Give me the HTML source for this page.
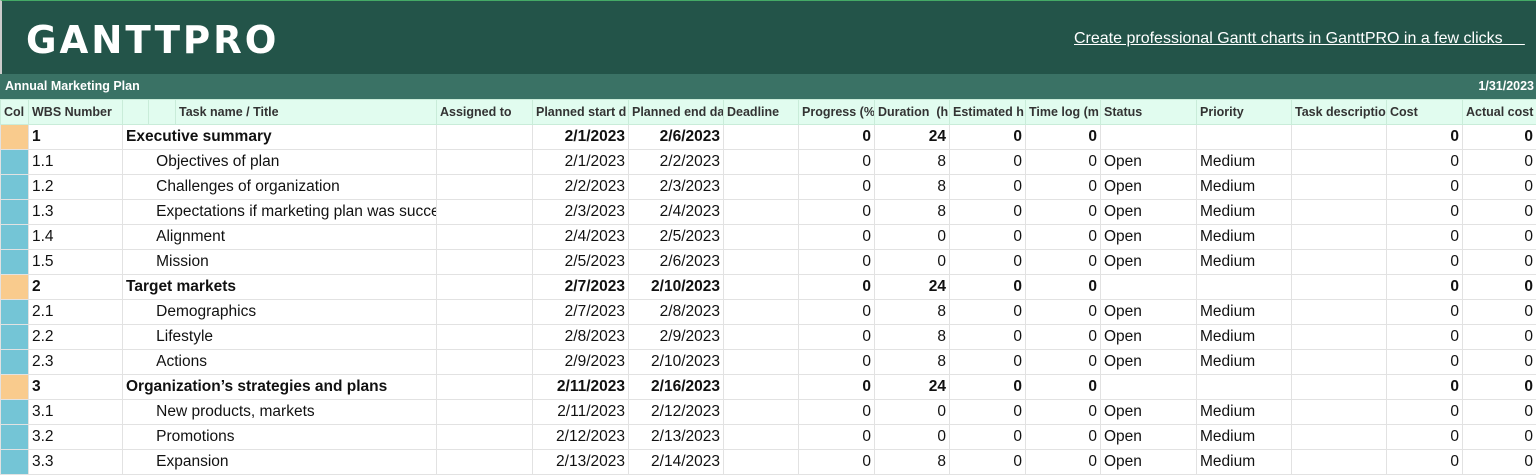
<!DOCTYPE html>
<html><head><meta charset="utf-8"><style>
*{margin:0;padding:0;box-sizing:border-box}
body{width:1536px;height:472px;overflow:hidden;background:#fff;font-family:"Liberation Sans",Arial,sans-serif}
.top{position:absolute;left:0;top:0;width:1536px;height:74px;background:#235449;border-top:1px solid #4a6;border-left:2px solid #ccc}
.logo{position:absolute;left:24px;top:17px;color:#fff;font-size:38px;font-weight:bold;letter-spacing:3px;font-family:"DejaVu Sans",sans-serif;transform:scaleX(0.98);transform-origin:left}
.link{position:absolute;left:1072px;top:29px;color:#fff;font-size:16px;text-decoration:underline;white-space:pre}
.title{position:absolute;left:0;top:74px;width:1536px;height:25px;background:#3a7265;color:#fff;font-size:12.5px;font-weight:bold}
.title span{position:absolute;top:5px}
table{position:absolute;left:0;top:99px;border-collapse:collapse;table-layout:fixed;width:1536px}
td{height:25px;border:1px solid #e2e2e2;font-size:15.5px;white-space:nowrap;overflow:hidden;padding:0 3px;color:#111}
tr.h td{background:#e1fcef;font-size:12.5px;font-weight:bold;color:#333;border-color:#c9ecd9;padding:0 3px}
tr.b td{font-weight:bold}
.r{text-align:right}
.o{background:#f9cb8d}.c{background:#74c5d6}
</style></head><body>
<div class="top"><div class="logo">GANTTPRO</div><div class="link">Create professional Gantt charts in GanttPRO in a few clicks     </div></div>
<div class="title"><span style="left:5px">Annual Marketing Plan</span><span style="right:2px">1/31/2023</span></div>
<table>
<colgroup><col style="width:28px"><col style="width:94px"><col style="width:26px"><col style="width:27px"><col style="width:261px"><col style="width:96px"><col style="width:96px"><col style="width:95px"><col style="width:75px"><col style="width:76px"><col style="width:75px"><col style="width:76px"><col style="width:75px"><col style="width:96px"><col style="width:95px"><col style="width:95px"><col style="width:76px"><col style="width:74px"></colgroup>
<tr class="h"><td>Col</td><td>WBS Number</td><td></td><td></td><td>Task name / Title</td><td>Assigned to</td><td>Planned start d</td><td>Planned end da</td><td>Deadline</td><td class="r">Progress (%</td><td>Duration &nbsp;(h</td><td>Estimated h</td><td>Time log (m</td><td>Status</td><td>Priority</td><td>Task descriptio</td><td>Cost</td><td class="r">Actual cost</td></tr>
<tr class="b"><td class="o"></td><td>1</td><td colspan="3">Executive summary</td><td></td><td class="r">2/1/2023</td><td class="r">2/6/2023</td><td></td><td class="r">0</td><td class="r">24</td><td class="r">0</td><td class="r">0</td><td></td><td></td><td></td><td class="r">0</td><td class="r">0</td></tr>
<tr><td class="c"></td><td>1.1</td><td colspan="3">&nbsp;&nbsp;&nbsp;&nbsp;&nbsp;&nbsp;&nbsp;Objectives of plan</td><td></td><td class="r">2/1/2023</td><td class="r">2/2/2023</td><td></td><td class="r">0</td><td class="r">8</td><td class="r">0</td><td class="r">0</td><td>Open</td><td>Medium</td><td></td><td class="r">0</td><td class="r">0</td></tr>
<tr><td class="c"></td><td>1.2</td><td colspan="3">&nbsp;&nbsp;&nbsp;&nbsp;&nbsp;&nbsp;&nbsp;Challenges of organization</td><td></td><td class="r">2/2/2023</td><td class="r">2/3/2023</td><td></td><td class="r">0</td><td class="r">8</td><td class="r">0</td><td class="r">0</td><td>Open</td><td>Medium</td><td></td><td class="r">0</td><td class="r">0</td></tr>
<tr><td class="c"></td><td>1.3</td><td colspan="3">&nbsp;&nbsp;&nbsp;&nbsp;&nbsp;&nbsp;&nbsp;Expectations if marketing plan was successful</td><td></td><td class="r">2/3/2023</td><td class="r">2/4/2023</td><td></td><td class="r">0</td><td class="r">8</td><td class="r">0</td><td class="r">0</td><td>Open</td><td>Medium</td><td></td><td class="r">0</td><td class="r">0</td></tr>
<tr><td class="c"></td><td>1.4</td><td colspan="3">&nbsp;&nbsp;&nbsp;&nbsp;&nbsp;&nbsp;&nbsp;Alignment</td><td></td><td class="r">2/4/2023</td><td class="r">2/5/2023</td><td></td><td class="r">0</td><td class="r">0</td><td class="r">0</td><td class="r">0</td><td>Open</td><td>Medium</td><td></td><td class="r">0</td><td class="r">0</td></tr>
<tr><td class="c"></td><td>1.5</td><td colspan="3">&nbsp;&nbsp;&nbsp;&nbsp;&nbsp;&nbsp;&nbsp;Mission</td><td></td><td class="r">2/5/2023</td><td class="r">2/6/2023</td><td></td><td class="r">0</td><td class="r">0</td><td class="r">0</td><td class="r">0</td><td>Open</td><td>Medium</td><td></td><td class="r">0</td><td class="r">0</td></tr>
<tr class="b"><td class="o"></td><td>2</td><td colspan="3">Target markets</td><td></td><td class="r">2/7/2023</td><td class="r">2/10/2023</td><td></td><td class="r">0</td><td class="r">24</td><td class="r">0</td><td class="r">0</td><td></td><td></td><td></td><td class="r">0</td><td class="r">0</td></tr>
<tr><td class="c"></td><td>2.1</td><td colspan="3">&nbsp;&nbsp;&nbsp;&nbsp;&nbsp;&nbsp;&nbsp;Demographics</td><td></td><td class="r">2/7/2023</td><td class="r">2/8/2023</td><td></td><td class="r">0</td><td class="r">8</td><td class="r">0</td><td class="r">0</td><td>Open</td><td>Medium</td><td></td><td class="r">0</td><td class="r">0</td></tr>
<tr><td class="c"></td><td>2.2</td><td colspan="3">&nbsp;&nbsp;&nbsp;&nbsp;&nbsp;&nbsp;&nbsp;Lifestyle</td><td></td><td class="r">2/8/2023</td><td class="r">2/9/2023</td><td></td><td class="r">0</td><td class="r">8</td><td class="r">0</td><td class="r">0</td><td>Open</td><td>Medium</td><td></td><td class="r">0</td><td class="r">0</td></tr>
<tr><td class="c"></td><td>2.3</td><td colspan="3">&nbsp;&nbsp;&nbsp;&nbsp;&nbsp;&nbsp;&nbsp;Actions</td><td></td><td class="r">2/9/2023</td><td class="r">2/10/2023</td><td></td><td class="r">0</td><td class="r">8</td><td class="r">0</td><td class="r">0</td><td>Open</td><td>Medium</td><td></td><td class="r">0</td><td class="r">0</td></tr>
<tr class="b"><td class="o"></td><td>3</td><td colspan="3">Organization’s strategies and plans</td><td></td><td class="r">2/11/2023</td><td class="r">2/16/2023</td><td></td><td class="r">0</td><td class="r">24</td><td class="r">0</td><td class="r">0</td><td></td><td></td><td></td><td class="r">0</td><td class="r">0</td></tr>
<tr><td class="c"></td><td>3.1</td><td colspan="3">&nbsp;&nbsp;&nbsp;&nbsp;&nbsp;&nbsp;&nbsp;New products, markets</td><td></td><td class="r">2/11/2023</td><td class="r">2/12/2023</td><td></td><td class="r">0</td><td class="r">0</td><td class="r">0</td><td class="r">0</td><td>Open</td><td>Medium</td><td></td><td class="r">0</td><td class="r">0</td></tr>
<tr><td class="c"></td><td>3.2</td><td colspan="3">&nbsp;&nbsp;&nbsp;&nbsp;&nbsp;&nbsp;&nbsp;Promotions</td><td></td><td class="r">2/12/2023</td><td class="r">2/13/2023</td><td></td><td class="r">0</td><td class="r">0</td><td class="r">0</td><td class="r">0</td><td>Open</td><td>Medium</td><td></td><td class="r">0</td><td class="r">0</td></tr>
<tr><td class="c"></td><td>3.3</td><td colspan="3">&nbsp;&nbsp;&nbsp;&nbsp;&nbsp;&nbsp;&nbsp;Expansion</td><td></td><td class="r">2/13/2023</td><td class="r">2/14/2023</td><td></td><td class="r">0</td><td class="r">8</td><td class="r">0</td><td class="r">0</td><td>Open</td><td>Medium</td><td></td><td class="r">0</td><td class="r">0</td></tr>
</table>
</body></html>
